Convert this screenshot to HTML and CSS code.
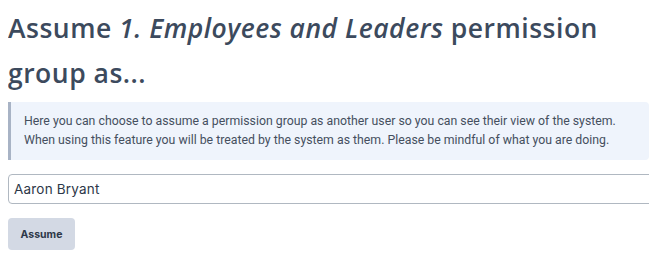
FILE: index.html
```html
<!DOCTYPE html>
<html lang="en">
<head>
    <meta charset="UTF-8">
    <meta name="viewport" content="width=device-width, initial-scale=1.0">
    <title>Assume permission group</title>
    <link rel="stylesheet" href="styles.css">
</head>
<body>
    <h1 class="page-title">Assume <em>1. Employees and Leaders</em> permission group as...</h1>

    <div class="callout">
        Here you can choose to assume a permission group as another user so you can see their view of the system.<br>
        When using this feature you will be treated by the system as them. Please be mindful of what you are doing.
    </div>

    <form class="assume-form">
        <input type="text" class="user-input" value="Aaron Bryant">
        <button type="button" class="btn-assume">Assume</button>
    </form>
</body>
</html>
```

FILE: styles.css
```css
body {
    margin: 8px;
    font-family: Roboto, "Liberation Sans", sans-serif;
    color: #4a5568;
    background: #fff;
    overflow-x: hidden;
}
.page-title {
    font-family: "Open Sans", "DejaVu Sans", sans-serif;
    font-weight: 600;
    font-size: 26.5px;
    letter-spacing: 0.5px;
    line-height: 45px;
    color: #3c4a5d;
    margin: -2px 0 6px 0;
}
.page-title em {
    font-style: italic;
}
.callout {
    background: #eff4fc;
    border-left: 3px solid #a8b3c5;
    border-radius: 0 4px 4px 0;
    padding: 10px 13px;
    font-size: 12.3px;
    line-height: 19px;
    white-space: nowrap;
    color: #454f5e;
}
.assume-form {
    margin-top: 14px;
}
.user-input {
    display: block;
    width: 100%;
    height: 28px;
    padding: 0 5px;
    border: 1px solid #b0b8c1;
    border-radius: 4px;
    font-family: Inter, Roboto, sans-serif;
    font-size: 13.5px;
    letter-spacing: 0.2px;
    color: #2d3748;
    box-sizing: content-box;
}
.btn-assume {
    display: block;
    margin-top: 14px;
    width: 67px;
    height: 32px;
    background: #d3d9e4;
    border: none;
    border-radius: 4px;
    font-family: Inter, Roboto, sans-serif;
    font-size: 10.5px;
    font-weight: 700;
    color: #2d3748;
}
```
